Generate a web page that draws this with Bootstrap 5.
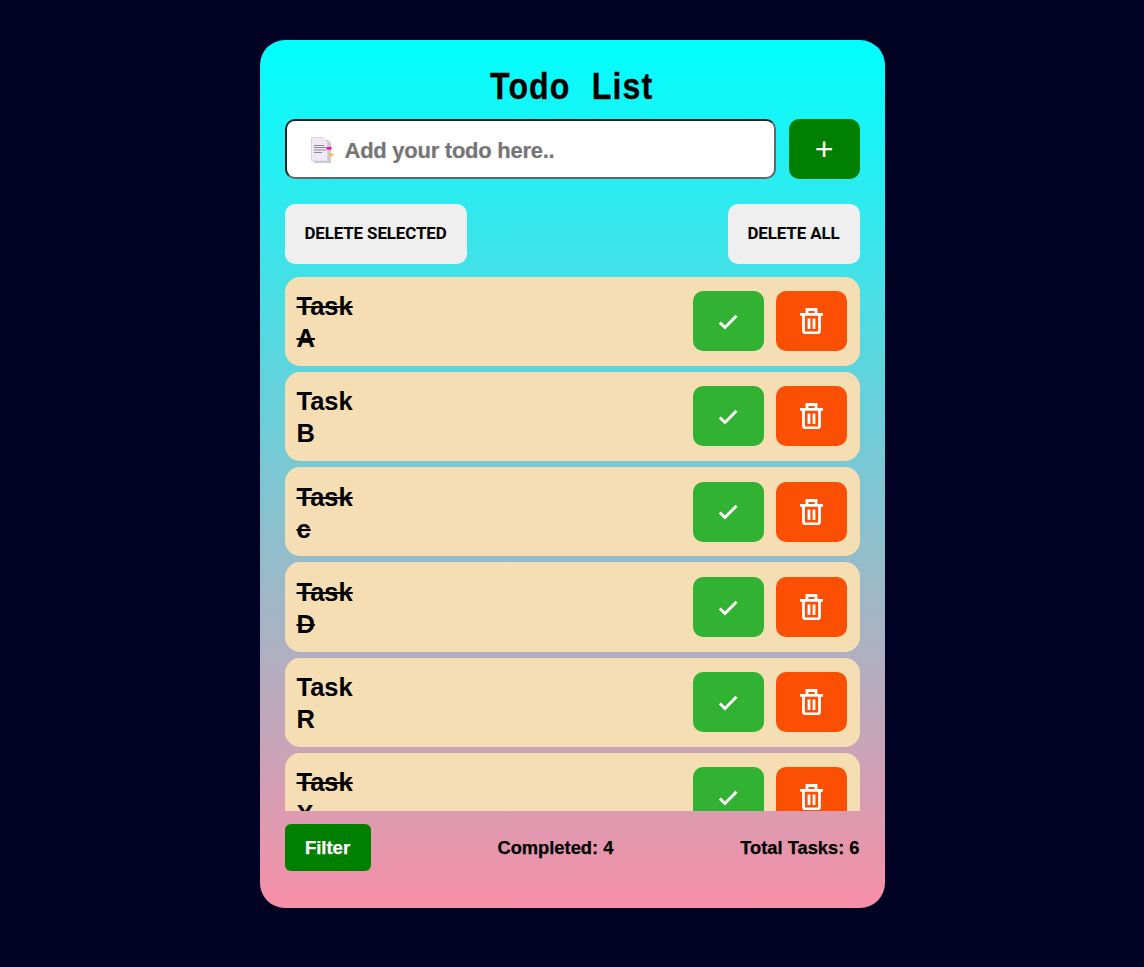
<!DOCTYPE html>
<html lang="en">
<head>
<meta charset="utf-8">
<title>Todo List</title>
<link href="https://cdn.jsdelivr.net/npm/bootstrap@5.3.0/dist/css/bootstrap.min.css" rel="stylesheet">
<style>
body { background: #000123; font-family: "Liberation Sans", Arial, sans-serif; font-weight: 700; overflow: hidden; }
.shell { height: 967px; padding-top: 40px; }
.panel { width: 625px; height: 868px; margin: 0 auto; padding: 0 25px; border-radius: 25px; background: linear-gradient(180deg, #00ffff 0%, #f78fa7 100%); }
.panel-title { height: 79px; margin: 0; padding-top: 27px; font-size: 36.5px; line-height: 40px; font-weight: 700; color: #000; }
.title-text { display: inline-block; transform: scaleX(.88); letter-spacing: 1.2px; word-spacing: 13px; -webkit-text-stroke: .3px #000; }
.add-row { height: 60px; gap: 13px; }
.add-box { width: 491px; height: 60px; background: #fff; border: 2px solid; border-color: #222 #666 #666 #222; border-radius: 10px; padding-left: 23px; gap: 11px; }
.add-box svg { margin-top: 2px; }
.add-box input { flex: 1; min-width: 0; border: 0; outline: 0; background: transparent; padding: 3px 0 0; font: 700 22px "Liberation Sans", Arial, sans-serif; letter-spacing: -.26px; -webkit-text-stroke: .2px #757575; }
.add-box input::placeholder { color: #757575; opacity: 1; }
.btn-add { width: 71px; height: 60px; background: #008000; color: #fff; border: 0; border-radius: 10px; font-size: 32px; font-weight: 400; line-height: 1; padding: 0; }
.bulk-row { margin-top: 25px; height: 60px; }
.btn-bulk { height: 60px; background: #efefef; color: #000; border: 0; border-radius: 10px; padding: 0; font-family: Roboto, "Liberation Sans", sans-serif; font-size: 16.900px; font-weight: 700; letter-spacing: -.1px; text-transform: uppercase; }
.w-sel { width: 182px; }
.w-all { width: 132px; }
.task-scroll { margin-top: 12.8px; height: 534.2px; overflow: hidden; }
.task-row { height: 89.2px; margin-bottom: 6px; background: #f5deb3; border-radius: 15px; padding: 0 13px 0 12px; color: #000; }
.task-text { width: 70px; padding-top: 13.5px; font-size: 25.5px; line-height: 32px; }
.struck { text-decoration: line-through; }
.task-acts { gap: 12px; padding-top: 14.4px; }
.btn-act { width: 71px; height: 60px; border: 0; border-radius: 10px; padding: 0; color: #fff; }
.btn-ok, .btn-ok:hover { background: #32b232; }
.btn-del, .btn-del:hover { background: #fb4f04; }
.foot-row { height: 47px; margin-top: 13px; font-size: 18.300px; color: #000; -webkit-text-stroke: .25px #000; }
.btn-filter { width: 86px; height: 47px; background: #008000; color: #fff; border: 0; border-radius: 6px; font-size: 18.500px; font-weight: 700; padding: 0; -webkit-text-stroke: .25px #fff; }
.btn-filter:hover, .btn-add:hover { background: #008000; color: #fff; }
.btn-bulk:hover { background: #efefef; color: #000; }
.ico-defs { width: 0; height: 0; }
</style>
</head>
<body>
<svg class="ico-defs position-absolute" aria-hidden="true">
  <symbol id="i-check" viewBox="0 0 20 16"><path d="M1.800 8.500L7 13.500 18.500 1.800" fill="none" stroke="#fff" stroke-width="3"/></symbol>
  <symbol id="i-trash" viewBox="0 0 23 26"><path d="M0 6.300h23M7 5.500V1.500h9v4M3.500 6.500v16.500a1.800 1.800 0 0 0 1.800 1.800h12.400a1.800 1.800 0 0 0 1.800-1.800V6.500M9 10.500v10.500M14 10.500v10.500" fill="none" stroke="#fff" stroke-width="2.800"/></symbol>
</svg>
<div class="shell">
  <main class="panel">
    <h1 class="panel-title text-center"><span class="title-text">Todo List</span></h1>
    <div class="add-row d-flex">
      <div class="add-box d-flex align-items-center">
        <svg width="24" height="27" viewBox="0 0 24 27" aria-hidden="true">
          <path d="M4 3h14l3 3v20H4z" fill="#cfc6d8"/>
          <path d="M1.500 1.500a1 1 0 0 1 1-1h10.500l4.500 4.500v18a1 1 0 0 1-1 1h-14a1 1 0 0 1-1-1z" fill="#efe9f5" stroke="#d8cfe0"/>
          <path d="M4 8.500h10M4 10.500h12M4 13h12M4 15.500h8" stroke="#8d8799" stroke-width="1"/>
          <rect x="16.500" y="10" width="5" height="2.600" fill="#f0129a"/>
          <rect x="19" y="16.500" width="4.500" height="2.400" fill="#fdbc3d"/>
        </svg>
        <input type="text" placeholder="Add your todo here.." aria-label="Add your todo here">
      </div>
      <button class="btn btn-add">+</button>
    </div>
    <div class="bulk-row d-flex justify-content-between">
      <button class="btn btn-bulk w-sel">Delete Selected</button>
      <button class="btn btn-bulk w-all">Delete All</button>
    </div>
    <div class="task-scroll">
      <div class="task-row d-flex justify-content-between"><div class="task-text struck">Task A</div><div class="task-acts d-flex"><button class="btn btn-act btn-ok" aria-label="Complete"><svg width="20" height="16"><use href="#i-check"/></svg></button><button class="btn btn-act btn-del" aria-label="Delete"><svg width="23" height="26"><use href="#i-trash"/></svg></button></div></div>
      <div class="task-row d-flex justify-content-between"><div class="task-text">Task B</div><div class="task-acts d-flex"><button class="btn btn-act btn-ok" aria-label="Complete"><svg width="20" height="16"><use href="#i-check"/></svg></button><button class="btn btn-act btn-del" aria-label="Delete"><svg width="23" height="26"><use href="#i-trash"/></svg></button></div></div>
      <div class="task-row d-flex justify-content-between"><div class="task-text struck">Task c</div><div class="task-acts d-flex"><button class="btn btn-act btn-ok" aria-label="Complete"><svg width="20" height="16"><use href="#i-check"/></svg></button><button class="btn btn-act btn-del" aria-label="Delete"><svg width="23" height="26"><use href="#i-trash"/></svg></button></div></div>
      <div class="task-row d-flex justify-content-between"><div class="task-text struck">Task D</div><div class="task-acts d-flex"><button class="btn btn-act btn-ok" aria-label="Complete"><svg width="20" height="16"><use href="#i-check"/></svg></button><button class="btn btn-act btn-del" aria-label="Delete"><svg width="23" height="26"><use href="#i-trash"/></svg></button></div></div>
      <div class="task-row d-flex justify-content-between"><div class="task-text">Task R</div><div class="task-acts d-flex"><button class="btn btn-act btn-ok" aria-label="Complete"><svg width="20" height="16"><use href="#i-check"/></svg></button><button class="btn btn-act btn-del" aria-label="Delete"><svg width="23" height="26"><use href="#i-trash"/></svg></button></div></div>
      <div class="task-row d-flex justify-content-between"><div class="task-text struck">Task X</div><div class="task-acts d-flex"><button class="btn btn-act btn-ok" aria-label="Complete"><svg width="20" height="16"><use href="#i-check"/></svg></button><button class="btn btn-act btn-del" aria-label="Delete"><svg width="23" height="26"><use href="#i-trash"/></svg></button></div></div>
    </div>
    <div class="foot-row d-flex align-items-center justify-content-between">
      <button class="btn btn-filter">Filter</button>
      <span>Completed: 4</span>
      <span>Total Tasks: 6</span>
    </div>
  </main>
</div>
<script src="https://cdn.jsdelivr.net/npm/bootstrap@5.3.0/dist/js/bootstrap.bundle.min.js"></script>
</body>
</html>
